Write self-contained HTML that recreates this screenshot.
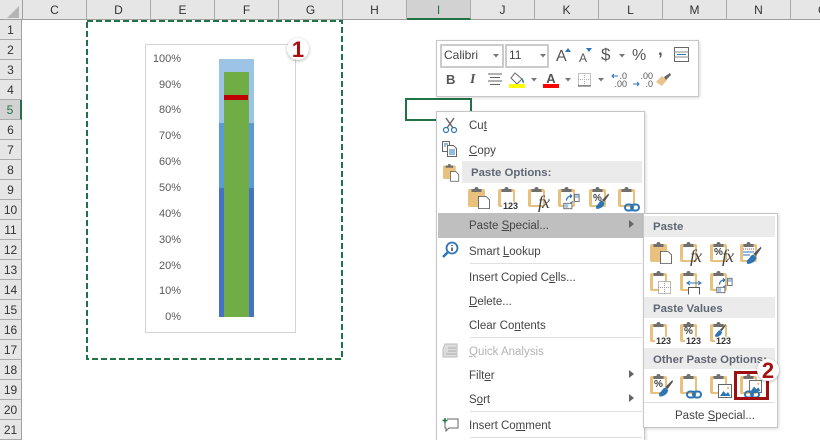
<!DOCTYPE html>
<html><head><meta charset="utf-8">
<style>
html,body{margin:0;padding:0;background:#fff}
#p{position:relative;width:820px;height:440px;overflow:hidden;background:#fff;font-family:"Liberation Sans",sans-serif}
#p div,#p svg{position:absolute}
.c{top:0;height:19px;width:63px;background:#e6e6e6;border-right:1px solid #ababab;border-bottom:1px solid #9f9f9f;text-align:center;font-size:12px;line-height:21px;color:#333}
.r{left:0;width:21px;height:19px;background:#e6e6e6;border-right:1px solid #9f9f9f;border-bottom:1px solid #ababab;text-align:center;font-size:12px;line-height:20px;color:#333}
.y{left:150px;width:31px;text-align:right;font-size:11px;line-height:14px;color:#595959}
.m{left:469px;font-size:11.5px;line-height:14px;color:#444;white-space:nowrap}
.m u{text-underline-offset:1px}
.b{font-weight:bold;font-size:11.4px;line-height:14px;color:#5f6673;white-space:nowrap}
.bar{background:#ebebeb}
.sep{height:1px;background:#e0e0e0}
.arr{width:0;height:0;border-left:5px solid #777;border-top:4px solid transparent;border-bottom:4px solid transparent}
.ic{width:24px;height:24px}
.n{font:bold 9px/9px "Liberation Sans",sans-serif;color:#333}
.fx{font:italic 18px/18px "Liberation Serif",serif;color:#444;letter-spacing:-1px}
.pc{font-size:10px;font-weight:bold;line-height:10px;color:#444}
</style></head><body>
<div id="p">
<svg width="0" height="0" style="left:0;top:0"><defs>
<symbol id="cb" viewBox="0 0 24 24"><rect x="0" y="2" width="17" height="18" rx="2" fill="#e8c17f"/><rect x="3" y="5" width="12" height="13" fill="#fff"/><path d="M3.500 5V2h3a2 2 0 0 1 4 0h3v3z" fill="#6f6f6f"/></symbol>
<symbol id="cbf" viewBox="0 0 24 24"><rect x="0" y="2" width="17" height="18" rx="2" fill="#e8c17f"/><path d="M3.500 5V2h3a2 2 0 0 1 4 0h3v3z" fill="#6f6f6f"/></symbol>
<symbol id="link" viewBox="0 0 16 9"><rect x="1" y="1.500" width="8" height="6" rx="3" fill="none" stroke="#2e75b6" stroke-width="2"/><rect x="7" y="1.500" width="8" height="6" rx="3" fill="none" stroke="#2e75b6" stroke-width="2"/></symbol>
<symbol id="pg" viewBox="0 0 14 15"><path d="M.5.500h9l4 4v10H.5z" fill="#fff" stroke="#555"/></symbol>
<symbol id="pic" viewBox="0 0 14 14"><rect x=".5" y=".5" width="13" height="13" fill="#fff" stroke="#666"/><path d="M2 12l3.500-5 2.500 3 2-2 2.500 4z" fill="#2e75b6"/><circle cx="10" cy="4" r="1.200" fill="#e8c17f"/></symbol>
<symbol id="brush" viewBox="0 0 14 16"><path d="M13.500.5L7 7l2 2 5-7z" fill="#555"/><path d="M7 7.500C4 8 4 11 1 13c0 1 0 2 .5 3C5 16 9 14 9.500 10z" fill="#2e75b6"/></symbol>
<symbol id="sw" viewBox="0 0 20 18"><rect x="14" y="1" width="5" height="8" fill="#fff" stroke="#666"/><rect x="14.500" y="1.500" width="4" height="3.500" fill="#9dc3e6"/><rect x="2" y="11" width="9" height="6" fill="#fff" stroke="#666"/><rect x="3" y="12" width="4" height="4" fill="#9dc3e6"/><path d="M5 8a5 5 0 0 1 6-5M11 3L9 1M11 3L9 5M12 9l-3 2" fill="none" stroke="#2e75b6" stroke-width="1.400"/></symbol>
</defs></svg>

<!-- headers -->
<div style="left:0;top:0;width:22px;height:19px;background:#e6e6e6;border-right:1px solid #9f9f9f;border-bottom:1px solid #9f9f9f"></div>
<svg style="left:7px;top:6px" width="13" height="12"><path d="M12 0V12H0z" fill="#b5b5b5"/></svg>
<div class="c" style="left:23px">C</div>
<div class="c" style="left:87px">D</div>
<div class="c" style="left:151px">E</div>
<div class="c" style="left:215px">F</div>
<div class="c" style="left:279px">G</div>
<div class="c" style="left:343px">H</div>
<div class="c" style="left:407px;background:#d2d2d2;color:#217346;height:18px;border-bottom:2px solid #217346">I</div>
<div class="c" style="left:471px">J</div>
<div class="c" style="left:535px">K</div>
<div class="c" style="left:599px">L</div>
<div class="c" style="left:663px">M</div>
<div class="c" style="left:727px">N</div>
<div class="c" style="left:791px;width:29px;border-right:0;text-align:left;padding-left:0"><span style="margin-left:27px">O</span></div>
<div class="r" style="top:20px">1</div>
<div class="r" style="top:40px">2</div>
<div class="r" style="top:60px">3</div>
<div class="r" style="top:80px">4</div>
<div class="r" style="top:100px;background:#d2d2d2;color:#217346;width:20px;border-right:2px solid #217346">5</div>
<div class="r" style="top:120px">6</div>
<div class="r" style="top:140px">7</div>
<div class="r" style="top:160px">8</div>
<div class="r" style="top:180px">9</div>
<div class="r" style="top:200px">10</div>
<div class="r" style="top:220px">11</div>
<div class="r" style="top:240px">12</div>
<div class="r" style="top:260px">13</div>
<div class="r" style="top:280px">14</div>
<div class="r" style="top:300px">15</div>
<div class="r" style="top:320px">16</div>
<div class="r" style="top:340px">17</div>
<div class="r" style="top:360px">18</div>
<div class="r" style="top:380px">19</div>
<div class="r" style="top:400px">20</div>
<div class="r" style="top:420px">21</div>

<!-- dashed copy region -->
<svg style="left:85px;top:19px" width="260" height="343"><rect x="2" y="2" width="255" height="338" fill="none" stroke="#217346" stroke-width="2" stroke-dasharray="6 3"/></svg>

<!-- chart -->
<div style="left:145px;top:44px;width:149px;height:287px;border:1px solid #d4d4d4;background:#fff"></div>
<div class="y" style="top:52px">100%</div>
<div class="y" style="top:78px">90%</div>
<div class="y" style="top:103px">80%</div>
<div class="y" style="top:129px">70%</div>
<div class="y" style="top:155px">60%</div>
<div class="y" style="top:181px">50%</div>
<div class="y" style="top:207px">40%</div>
<div class="y" style="top:233px">30%</div>
<div class="y" style="top:259px">20%</div>
<div class="y" style="top:284px">10%</div>
<div class="y" style="top:310px">0%</div>
<div style="left:219px;top:59px;width:35px;height:64px;background:#9dc3e6"></div>
<div style="left:219px;top:123px;width:35px;height:65px;background:#5b9bd5"></div>
<div style="left:219px;top:188px;width:35px;height:129px;background:#4472c4"></div>
<div style="left:224px;top:72px;width:25px;height:245px;background:#70ad47"></div>
<div style="left:224px;top:95px;width:24px;height:5px;background:#c00000"></div>
<div style="left:287px;top:38px;width:22px;height:22px;border-radius:50%;background:#fff;box-shadow:0 1px 3px rgba(0,0,0,.3);text-align:center;font:bold 22px/24px 'Liberation Sans',sans-serif;color:#a80f0f">1</div>

<!-- selected cell -->
<div style="left:405px;top:98px;width:63px;height:19px;border:2px solid #217346;background:#fff"></div>

<!-- mini toolbar -->
<div style="left:436px;top:40px;width:261px;height:55px;background:#fff;border:1px solid #c6c6c6;box-shadow:1px 1px 3px rgba(0,0,0,.15)"></div>
<div style="left:440px;top:44px;width:60px;height:20px;border:2px solid #cbcbcb;font-size:12px;line-height:19px;color:#444;text-indent:2px">Calibri</div>
<div style="left:505px;top:44px;width:40px;height:20px;border:2px solid #cbcbcb;font-size:12px;line-height:19px;color:#444;text-indent:2px">11</div>
<svg style="left:493px;top:54px" width="60" height="5"><path d="M0 0h6L3 3.500zM47 0h6l-3 3.500z" fill="#777"/></svg>
<div style="left:556px;top:47px;font-size:16px;line-height:20px;color:#555">A</div>
<svg style="left:565px;top:48px" width="6" height="4"><path d="M0 4h6L3 0z" fill="#2e75b6"/></svg>
<div style="left:579px;top:50px;font-size:12px;line-height:16px;color:#555">A</div>
<svg style="left:586px;top:48px" width="6" height="4"><path d="M0 0h6L3 4z" fill="#2e75b6"/></svg>
<div style="left:601px;top:45px;font-size:17px;line-height:20px;color:#555">$</div>
<svg style="left:619px;top:54px" width="7" height="4"><path d="M0 0h6L3 3.500z" fill="#777"/></svg>
<div style="left:632px;top:46px;font-size:16px;line-height:20px;color:#555">%</div>
<div style="left:658px;top:40px;font-size:17px;font-weight:bold;line-height:20px;color:#555">,</div>
<svg style="left:674px;top:47px" width="17" height="17"><rect x=".5" y=".5" width="14" height="14" fill="#fff" stroke="#666"/><path d="M0 5h15M0 10h15" stroke="#888"/><path d="M3 7.500h9" stroke="#2e75b6"/></svg>
<div style="left:446px;top:72px;font-size:13px;font-weight:bold;line-height:16px;color:#555">B</div>
<div style="left:470px;top:72px;font:italic bold 14px/16px 'Liberation Serif',serif;color:#555">I</div>
<svg style="left:488px;top:73px" width="15" height="13"><path d="M0 1h14M2 4.500h10M0 8h14M2 11.500h10" stroke="#666"/></svg>
<svg style="left:509px;top:72px" width="17" height="14"><path d="M6 1l7 6-5 5-6-6z" fill="#fff" stroke="#666"/><path d="M13 6c2 2 2 4 2 5-2 0-2-2-2-5z" fill="#2e75b6"/></svg>
<div style="left:509px;top:84px;width:16px;height:4px;background:#ffff00"></div>
<svg style="left:531px;top:78px" width="7" height="4"><path d="M0 0h6L3 3.500z" fill="#777"/></svg>
<div style="left:543px;top:71px;width:16px;text-align:center;font-size:13px;font-weight:bold;line-height:15px;color:#555">A</div>
<div style="left:543px;top:84px;width:16px;height:4px;background:#ff0000"></div>
<svg style="left:565px;top:78px" width="7" height="4"><path d="M0 0h6L3 3.500z" fill="#777"/></svg>
<svg style="left:578px;top:73px" width="14" height="14"><rect x=".5" y=".5" width="12" height="12" fill="none" stroke="#888" stroke-dasharray="1 1"/><path d="M6.500 0v13M0 6.500h13" stroke="#aaa" stroke-dasharray="1 1"/><path d="M0 13h13" stroke="#555"/></svg>
<svg style="left:598px;top:78px" width="7" height="4"><path d="M0 0h6L3 3.500z" fill="#777"/></svg>
<div style="left:611px;top:72px;font-size:9px;line-height:8px;color:#555;width:16px;text-align:right">.0<br>.00</div>
<svg style="left:611px;top:73px" width="8" height="6"><path d="M7 3H1M3 1L1 3l2 2" fill="none" stroke="#2e75b6"/></svg>
<div style="left:636px;top:72px;font-size:9px;line-height:8px;color:#555;width:17px;text-align:right">.00<br>.0</div>
<svg style="left:632px;top:81px" width="9" height="6"><path d="M1 3h6M5 1l2 2-2 2" fill="none" stroke="#2e75b6"/></svg>
<svg style="left:655px;top:72px" width="17" height="16"><path d="M1 10l6-6 5 4-5 6z" fill="#e8c38a"/><path d="M9 5l6-4 1 2-5 5z" fill="#666"/></svg>

<!-- context menu -->
<div style="left:436px;top:111px;width:207px;height:340px;background:#fff;border:1px solid #c6c6c6;box-shadow:1px 1px 3px rgba(0,0,0,.15)"></div>
<svg style="left:442px;top:117px" width="16" height="17"><path d="M4 1l7 10M12 1L5 11" stroke="#666" stroke-width="1.400"/><circle cx="4" cy="13" r="2.500" fill="none" stroke="#2e75b6" stroke-width="1.200"/><circle cx="12" cy="13" r="2.500" fill="none" stroke="#2e75b6" stroke-width="1.200"/></svg>
<div class="m" style="top:119px">Cu<u>t</u></div>
<svg style="left:442px;top:141px" width="16" height="16"><path d="M.5.500h7v10h-7z" fill="#fff" stroke="#666"/><path d="M5.500 4.500h6l3 3v8h-9z" fill="#fff" stroke="#666"/><path d="M2 3h4M2 5h2M7 9h6M7 11h6M7 13h6" stroke="#2e75b6"/></svg>
<div class="m" style="top:144px"><u>C</u>opy</div>
<svg style="left:443px;top:164px;width:18px;height:18px" viewBox="0 0 24 24"><use href="#cbf" width="24" height="24"/><path d="M10 10h7l4 4v9H10z" fill="#fff" stroke="#555"/></svg>
<div class="bar" style="left:462px;top:161px;width:180px;height:22px"></div>
<div class="b" style="left:471px;top:166px">Paste Options:</div>

<svg class="ic" style="left:468px;top:187px"><use href="#cbf" width="24" height="24"/></svg>
<svg style="left:478px;top:195px" width="12" height="15"><use href="#pg" width="12" height="15"/></svg>

<svg class="ic" style="left:498px;top:187px"><use href="#cb" width="24" height="24"/></svg>
<div class="n" style="left:502px;top:202px;background:#fff;padding:0 1px">123</div>

<svg class="ic" style="left:528px;top:187px"><use href="#cb" width="24" height="24"/></svg>
<div class="fx" style="left:538px;top:193px">fx</div>

<svg class="ic" style="left:558px;top:187px"><use href="#cb" width="24" height="24"/></svg>
<svg style="left:562px;top:193px" width="18" height="17"><use href="#sw" width="18" height="17"/></svg>

<svg class="ic" style="left:589px;top:187px"><use href="#cb" width="24" height="24"/></svg>
<div class="pc" style="left:593px;top:194px">%</div>
<svg style="left:595px;top:192px" width="14" height="18"><use href="#brush" width="14" height="18"/></svg>

<svg class="ic" style="left:618px;top:187px"><use href="#cb" width="24" height="24"/></svg>
<svg style="left:624px;top:203px" width="16" height="9"><use href="#link" width="16" height="9"/></svg>

<div style="left:438px;top:213px;width:205px;height:25px;background:#bfbfbf"></div>
<div class="m" style="top:219px">Paste <u>S</u>pecial...</div>
<div class="arr" style="left:629px;top:220px;border-left-color:#666"></div>

<svg style="left:442px;top:241px" width="17" height="18"><circle cx="10" cy="7" r="5.500" fill="none" stroke="#2e75b6" stroke-width="1.800"/><path d="M6 11l-5 5" stroke="#2e75b6" stroke-width="2.500"/><path d="M10 4v1M10 6.500V10" stroke="#444" stroke-width="1.500"/></svg>
<div class="m" style="top:245px">Smart <u>L</u>ookup</div>
<div class="sep" style="left:470px;top:263px;width:172px"></div>
<div class="m" style="top:271px">Insert Copied C<u>e</u>lls...</div>
<div class="m" style="top:295px"><u>D</u>elete...</div>
<div class="m" style="top:319px">Clear Co<u>n</u>tents</div>
<div class="sep" style="left:470px;top:337px;width:172px"></div>
<svg style="left:442px;top:343px" width="16" height="15"><path d="M3 1h12v13H1V6z" fill="#ddd" stroke="#bbb"/><path d="M6 5h8M6 8h8M4 11h10" stroke="#aaa"/></svg>
<div class="m" style="top:345px;color:#b4b4b4"><u>Q</u>uick Analysis</div>
<div class="m" style="top:369px">Filt<u>e</u>r</div>
<div class="arr" style="left:629px;top:370px;border-left-color:#666"></div>
<div class="m" style="top:393px">S<u>o</u>rt</div>
<div class="arr" style="left:629px;top:394px;border-left-color:#666"></div>
<div class="sep" style="left:470px;top:411px;width:172px"></div>
<svg style="left:442px;top:417px" width="17" height="15"><path d="M5 2h11v9H7l-3 3v-3H3V6" fill="none" stroke="#666"/><path d="M3 1v5M.5 3.500h5" stroke="#217346" stroke-width="1.500"/></svg>
<div class="m" style="top:419px">Insert Co<u>m</u>ment</div>
<div class="sep" style="left:470px;top:437px;width:172px"></div>

<!-- submenu -->
<div style="left:643px;top:213px;width:133px;height:213px;background:#fff;border:1px solid #c6c6c6;box-shadow:1px 1px 3px rgba(0,0,0,.15)"></div>
<div class="bar" style="left:644px;top:216px;width:131px;height:21px"></div>
<div class="b" style="left:653px;top:220px">Paste</div>
<svg class="ic" style="left:650px;top:242px"><use href="#cbf" width="24" height="24"/></svg>
<svg style="left:660px;top:250px" width="12" height="15"><use href="#pg" width="12" height="15"/></svg>
<svg class="ic" style="left:680px;top:242px"><use href="#cb" width="24" height="24"/></svg>
<div class="fx" style="left:690px;top:247px">fx</div>
<svg class="ic" style="left:710px;top:242px"><use href="#cb" width="24" height="24"/></svg>
<div class="pc" style="left:714px;top:248px">%</div>
<div class="fx" style="left:722px;top:247px">fx</div>
<svg class="ic" style="left:740px;top:242px"><use href="#cb" width="24" height="24"/></svg>
<svg style="left:743px;top:248px" width="12" height="9"><path d="M0 1h11" stroke="#d04a4a" stroke-dasharray="1 1"/><path d="M0 4h11M0 7h7" stroke="#2e75b6"/></svg>
<svg style="left:745px;top:246px" width="17" height="18"><use href="#brush" width="17" height="18"/></svg>

<svg class="ic" style="left:650px;top:271px"><use href="#cb" width="24" height="24"/></svg>
<svg style="left:658px;top:281px" width="14" height="13"><rect x=".5" y=".5" width="12" height="12" fill="#fff" stroke="#777" stroke-dasharray="1 1"/><path d="M6.500 0v13M0 6.500h13" stroke="#999" stroke-dasharray="1 1"/></svg>
<svg class="ic" style="left:680px;top:271px"><use href="#cb" width="24" height="24"/></svg>
<svg style="left:686px;top:280px" width="16" height="15"><path d="M1 3h14" stroke="#2e75b6"/><path d="M4 1L1 3l3 2M12 1l3 2-3 2" fill="none" stroke="#2e75b6"/><path d="M2.500 14.500v-7h11v7" fill="#fff" stroke="#555"/></svg>
<svg class="ic" style="left:710px;top:271px"><use href="#cb" width="24" height="24"/></svg>
<svg style="left:715px;top:277px" width="18" height="17"><use href="#sw" width="18" height="17"/></svg>

<div class="bar" style="left:644px;top:297px;width:131px;height:21px"></div>
<div class="b" style="left:653px;top:302px">Paste Values</div>
<svg class="ic" style="left:650px;top:322px"><use href="#cb" width="24" height="24"/></svg>
<div class="n" style="left:655px;top:337px;background:#fff;padding:0 1px">123</div>
<svg class="ic" style="left:680px;top:322px"><use href="#cb" width="24" height="24"/></svg>
<div class="pc" style="left:684px;top:327px">%</div>
<div class="n" style="left:685px;top:337px;background:#fff;padding:0 1px">123</div>
<svg class="ic" style="left:710px;top:322px"><use href="#cb" width="24" height="24"/></svg>
<svg style="left:714px;top:324px" width="12" height="13"><use href="#brush" width="12" height="13"/></svg>
<div class="n" style="left:715px;top:337px;background:#fff;padding:0 1px">123</div>

<div class="bar" style="left:644px;top:348px;width:131px;height:21px"></div>
<div class="b" style="left:653px;top:353px">Other Paste Options:</div>
<svg class="ic" style="left:650px;top:374px"><use href="#cb" width="24" height="24"/></svg>
<div class="pc" style="left:654px;top:380px">%</div>
<svg style="left:658px;top:378px" width="15" height="20"><use href="#brush" width="15" height="20"/></svg>
<svg class="ic" style="left:680px;top:374px"><use href="#cb" width="24" height="24"/></svg>
<svg style="left:686px;top:390px" width="16" height="9"><use href="#link" width="16" height="9"/></svg>
<svg class="ic" style="left:710px;top:374px"><use href="#cb" width="24" height="24"/></svg>
<svg style="left:718px;top:384px" width="14" height="14"><use href="#pic" width="14" height="14"/></svg>
<svg class="ic" style="left:740px;top:374px"><use href="#cb" width="24" height="24"/></svg>
<svg style="left:748px;top:380px" width="15" height="13"><use href="#pic" width="15" height="13"/></svg>
<svg style="left:744px;top:390px" width="16" height="9"><use href="#link" width="16" height="9"/></svg>
<div style="left:734px;top:371px;width:29px;height:23px;border:3px solid #a00f0f"></div>
<div class="sep" style="left:644px;top:402px;width:131px"></div>
<div class="m" style="left:675px;top:409px">Paste <u>S</u>pecial...</div>
<div style="left:757px;top:359px;width:22px;height:22px;border-radius:50%;background:#fff;box-shadow:0 1px 3px rgba(0,0,0,.3);text-align:center;font:bold 22px/24px 'Liberation Sans',sans-serif;color:#a80f0f">2</div>
</div>
</body></html>
